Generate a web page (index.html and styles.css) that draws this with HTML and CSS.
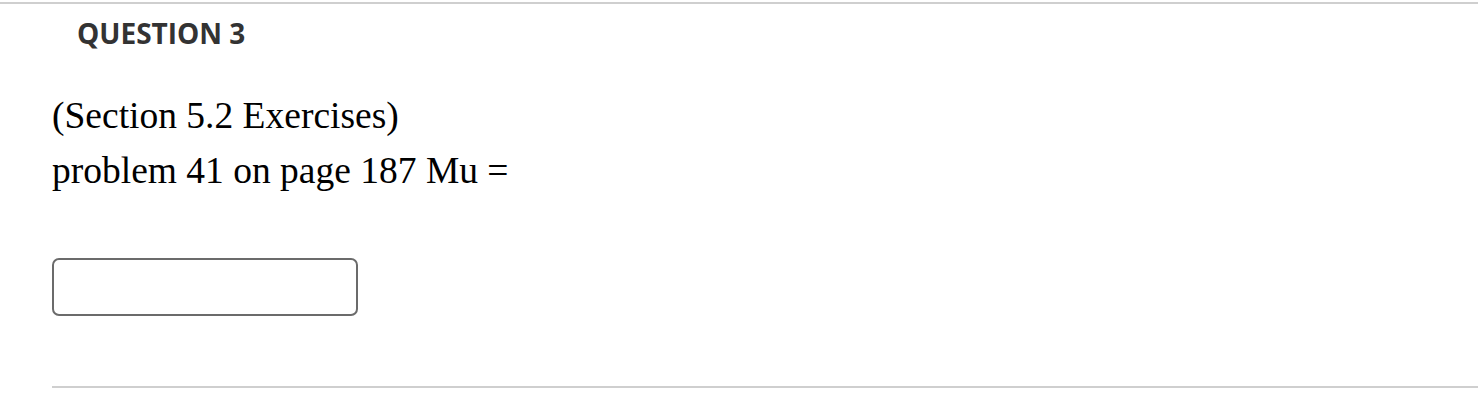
FILE: index.html
```html
<!DOCTYPE html>
<html>
<head>
<meta charset="utf-8">
<link rel="stylesheet" href="styles.css">
</head>
<body>
<div class="question">
  <h2 class="q-title">QUESTION 3</h2>
  <div class="q-body">
    <p class="q-line">(Section 5.2 Exercises)</p>
    <p class="q-line">problem 41 on page 187 Mu =</p>
    <div class="answer-row">
      <input class="answer" type="text" aria-label="answer">
    </div>
  </div>
  <hr class="q-rule">
</div>
</body>
</html>
```
FILE: styles.css
```css
html, body {
  margin: 0;
  padding: 0;
  background: #fff;
}
.question {
  padding-top: 2px;
}
.question::before {
  content: "";
  display: block;
  height: 2px;
  background: #cfcfcf;
}
.q-title {
  margin: 0;
  padding: 10px 0 0 77px;
  font-family: "Open Sans", sans-serif;
  font-weight: 700;
  font-size: 28px;
  line-height: 38px;
  color: #333;
}
.q-body {
  padding-left: 52px;
  padding-top: 36px;
}
.q-line {
  margin: 0;
  font-family: "Liberation Serif", "Times New Roman", serif;
  font-size: 37.5px;
  line-height: 55px;
  color: #000;
}
.answer-row {
  padding-top: 60px;
}
.answer {
  display: block;
  box-sizing: border-box;
  width: 306px;
  height: 58px;
  margin: 0;
  border: 2px solid #6b6b6b;
  border-radius: 7px;
  background: #fff;
  outline: none;
}
.q-rule {
  margin: 70px 0 0 52px;
  border: 0;
  height: 2px;
  background: #cfcfcf;
}
```
